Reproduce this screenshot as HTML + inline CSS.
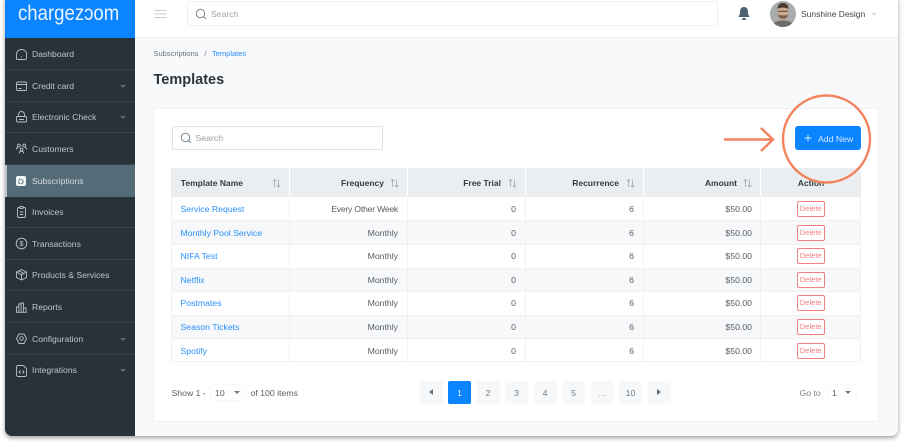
<!DOCTYPE html>
<html><head><meta charset="utf-8"><style>
html,body{margin:0;padding:0;width:902px;height:444px;overflow:hidden;background:#fff;font-family:"Liberation Sans",sans-serif}
*{box-sizing:border-box}
.a{position:absolute}
.t{position:absolute;white-space:nowrap;line-height:12px;font-size:8.7px}
#app{position:absolute;left:5px;top:-6px;width:893px;height:442px;background:#f7f9fb;border-radius:7px;box-shadow:0 2px 5px rgba(0,0,0,.38);overflow:hidden}
.si{position:absolute;left:5px;width:130px;height:32px;border-bottom:1px solid #33424c}
.st{position:absolute;left:32px;color:#bcc6cc;font-size:8.6px;line-height:12px;white-space:nowrap}
.car{position:absolute;left:120px;width:0;height:0;border-left:3px solid transparent;border-right:3px solid transparent;border-top:3px solid #5f6f79}
.th{position:absolute;top:168px;height:29px;background:#ebeef1;border-right:1px solid #fff;color:#343c43;font-weight:bold;font-size:8.5px;line-height:31px;text-align:right}
.pg{position:absolute;top:381px;width:23px;height:23px;background:#f7f8fa;border-radius:2px;text-align:center;line-height:24px;font-size:8.7px;color:#6d7a84}
.del{position:absolute;left:796.5px;width:28.5px;height:16px;border:1px solid #f27f81;border-radius:2px;color:#f27f81;background:#fff;font-size:7.6px;line-height:14px;text-align:center}
.ln{color:#2a8ffb}.g{color:#555e66}
</style></head><body>
<div id="app"></div>
<div class="a" style="left:135px;top:0;width:763px;height:38px;background:#fff;border-bottom:1px solid #f0f2f4"></div>
<div class="a" style="left:5px;top:0;width:130px;height:38px;background:#0a84ff"></div>
<div class="a" style="left:5px;top:38px;width:130px;height:398px;background:#273239;border-radius:0 0 0 7px"></div>
<div class="t" style="left:18px;top:1px;font-size:21px;line-height:26px;color:#eaf4ff;transform:scaleX(.885);transform-origin:left top">chargez<span>ɔ</span>om</div>

<svg class="a" style="left:154px;top:9px" width="14" height="10"><path d="M.5 1.500h12M.5 5h12M.5 8.500h12" stroke="#c5ccd2" stroke-width="1"/></svg>
<div class="a" style="left:187px;top:1px;width:531px;height:25px;border:1px solid #edf0f2;border-radius:2px;background:#fff"></div>
<svg class="a" style="left:195px;top:8px" width="12" height="12" fill="none" stroke="#7d8992"><circle cx="5.500" cy="5.500" r="4.200"/><path d="M8.500 8.500l2.500 2.500"/></svg>
<div class="t" style="left:211px;top:8px;color:#9aa4ab">Search</div>
<svg class="a" style="left:737px;top:6px" width="14" height="16"><path d="M7 1c-3 0-4 2.300-4 5 0 2.500-.8 3.800-1.800 5h11.600c-1-1.200-1.800-2.500-1.800-5 0-2.700-1-5-4-5z" fill="#4d6470"/><rect x="5" y="12" width="4" height="2" rx="1" fill="#4d6470"/></svg>
<svg class="a" style="left:769px;top:0" width="28" height="28"><defs><clipPath id="c"><circle cx="14" cy="14" r="13"/></clipPath></defs><g clip-path="url(#c)"><rect width="28" height="28" fill="#a8acac"/><path d="M3 28c1-6 5-7.500 11-7.500s10 1.500 11 7.500z" fill="#6f6c68"/><ellipse cx="14" cy="12.500" rx="5.500" ry="7.500" fill="#cfa98f"/><path d="M8.500 9c0-4.500 2.500-6 5.500-6s5.500 1.500 5.500 6c-2-1.800-9-2-11 0z" fill="#4a3a30"/><path d="M8.800 14c.7 6.500 9.700 6.500 10.400 0-1 1.600-2.200 1.400-5.200 1.400s-4.200.2-5.200-1.400z" fill="#7b5f4e"/><path d="M9 11.200h10" stroke="#4a4542" stroke-width="1"/></g></svg>
<div class="t" style="left:801px;top:8px;color:#3f474e;font-size:8.5px">Sunshine Design</div>
<div class="a" style="left:872px;top:13px;width:0;height:0;border-left:2.500px solid transparent;border-right:2.500px solid transparent;border-top:2.500px solid #c3cad0"></div>

<!-- sidebar -->
<div class="si" style="top:38px"></div><div class="si" style="top:70px"></div><div class="si" style="top:101px"></div><div class="si" style="top:133px"></div><div class="si" style="top:196px"></div><div class="si" style="top:228px"></div><div class="si" style="top:259px"></div><div class="si" style="top:291px"></div><div class="si" style="top:323px"></div><div class="si" style="top:354px;border:0"></div>
<div class="a" style="left:5px;top:165px;width:130px;height:32px;background:#546c78;border-left:2px solid #b8c5cc"></div>
<div class="st" style="top:48px">Dashboard</div>
<div class="st" style="top:80px">Credit card</div><div class="car" style="top:85px"></div>
<div class="st" style="top:111px">Electronic Check</div><div class="car" style="top:116px"></div>
<div class="st" style="top:143px">Customers</div>
<div class="st" style="top:175px;color:#d3dbe0">Subscriptions</div>
<div class="st" style="top:206px">Invoices</div>
<div class="st" style="top:238px">Transactions</div>
<div class="st" style="top:269px">Products &amp; Services</div>
<div class="st" style="top:301px">Reports</div>
<div class="st" style="top:333px">Configuration</div><div class="car" style="top:338px"></div>
<div class="st" style="top:364px">Integrations</div><div class="car" style="top:369px"></div>
<svg class="a" style="left:14.500px;top:47px" width="13" height="330" fill="none" stroke="#b8c3c9" stroke-width=".9">
<path d="M1.500 12.500V7.500C1.500 4 4 2.500 6.500 2.500S11.500 4 11.500 7.500v3.500a1.500 1.500 0 0 1-1.500 1.500H3A1.500 1.500 0 0 1 1.500 11z"/><path d="M6 10h1"/>
<g transform="translate(0,32)"><rect x="1.500" y="3" width="10" height="8.500" rx="1"/><path d="M1.500 5.500h10M3.500 9.500h3"/></g>
<g transform="translate(0,63)"><rect x="1.500" y="6.500" width="10" height="5.500" rx="1"/><path d="M3.500 6.500V4.500a3 3 0 0 1 6 0v2M4 9.500h5"/></g>
<g transform="translate(0,95)"><circle cx="3.800" cy="3.500" r="1.400"/><circle cx="9.200" cy="3.500" r="1.400"/><circle cx="6.500" cy="7.500" r="1.400"/><path d="M1.300 7.500c0-1.500.8-2 2-2M11.700 7.500c0-1.500-.8-2-2-2M4.200 11.500c0-1.500.8-2.200 2.300-2.200s2.300.7 2.300 2.200"/></g>
<g transform="translate(0,158)"><rect x="2.500" y="2.500" width="8" height="10" rx="1.500"/><rect x="5" y="1.500" width="3" height="2" fill="#273239"/><path d="M4.800 7h3.500M4.800 9.500h3.500"/></g>
<g transform="translate(0,190)"><circle cx="6.500" cy="6.500" r="5.300"/><text x="6.500" y="9.200" font-size="7.500" font-family="Liberation Sans" text-anchor="middle" fill="#b8c3c9" stroke="none">$</text></g>
<g transform="translate(0,221)"><path d="M6.500 1.500L11.500 4v5.500L6.500 12 1.500 9.500V4zM1.500 4L6.500 6.800 11.500 4M6.500 6.800V12M4 2.800l5 2.700"/></g>
<g transform="translate(0,253)"><path d="M1.500 12V7h2.300v5M3.800 12V4h2.300v8M6.100 12V3h2.300v9M8.400 12V8h2.600v4M.8 12.300h11"/></g>
<g transform="translate(0,285)"><path d="M4 2h5l2.500 4.500L9 11.500H4L1.500 6.500z" stroke-linejoin="round"/><circle cx="6.500" cy="6.500" r="1.800"/></g>
<g transform="translate(0,317)"><path d="M3 1.500h5.500l3 3v6.500a1.500 1.500 0 0 1-1.500 1.500H3A1.500 1.500 0 0 1 1.500 11V3A1.500 1.500 0 0 1 3 1.500z"/><path d="M5.500 6.500L4 8l1.500 1.500M7.500 6.500L9 8 7.500 9.500"/></g>
</svg>
<div class="a" style="left:16px;top:176px;width:9.500px;height:10px;background:#f2f5f6;border-radius:2px"></div>
<svg class="a" style="left:16px;top:176.500px" width="10" height="9" fill="none" stroke="#546c78"><circle cx="4.800" cy="4.500" r="2.300" stroke-dasharray="3 1"/></svg>

<!-- page head -->
<div class="t" style="left:153.500px;top:48px;font-size:7.500px;color:#68747d">Subscriptions</div>
<div class="t" style="left:204.500px;top:48px;font-size:7.500px;color:#68747d">/</div>
<div class="t" style="left:212px;top:48px;font-size:7.500px;color:#2a8ffb">Templates</div>
<div class="t" style="left:153.500px;top:71px;font-size:14.500px;line-height:18px;font-weight:bold;color:#2d353c">Templates</div>

<!-- card -->
<div class="a" style="left:153px;top:108px;width:726px;height:314px;background:#fff;border:1px solid #eff1f3;border-radius:2px"></div>
<div class="a" style="left:172px;top:126px;width:211px;height:24px;border:1px solid #dce1e5;border-radius:2px"></div>
<svg class="a" style="left:180px;top:132px" width="12" height="12" fill="none" stroke="#7d8992"><circle cx="5.500" cy="5.500" r="4.200"/><path d="M8.500 8.500l2.500 2.500"/></svg>
<div class="t" style="left:195.500px;top:132px;color:#98a2a9">Search</div>
<div class="a" style="left:795px;top:126px;width:66px;height:24px;background:#0a84ff;border-radius:3px"></div>
<svg class="a" style="left:804px;top:134px" width="8" height="8"><path d="M4 .5v7M.5 4h7" stroke="#d7e9ff" stroke-width="1"/></svg>
<div class="t" style="left:818px;top:132.500px;color:#d7e9ff">Add New</div>

<!-- table -->
<div class="a" style="left:171px;top:197px;width:690px;height:165px;border:1px solid #eef0f2;border-top:0"></div>
<div class="a" style="left:172px;top:221px;width:688px;height:23.500px;background:#f7f8fa"></div>
<div class="a" style="left:172px;top:268px;width:688px;height:23.500px;background:#f7f8fa"></div>
<div class="a" style="left:172px;top:315px;width:688px;height:24px;background:#f7f8fa"></div>
<svg class="a" style="left:171px;top:197px" width="690" height="165" stroke="#eff1f3" fill="none"><path d="M118.500 0v165M236.500 0v165M354.500 0v165M472.500 0v165M589.500 0v165M0 23.500h690M0 47.500h690M0 71.500h690M0 94.500h690M0 118.500h690M0 141.500h690"/></svg>
<div class="th" style="left:171px;width:119px;padding-right:46px">Template Name</div>
<div class="th" style="left:290px;width:118px;padding-right:23px">Frequency</div>
<div class="th" style="left:408px;width:118px;padding-right:24px">Free Trial</div>
<div class="th" style="left:526px;width:118px;padding-right:24px">Recurrence</div>
<div class="th" style="left:644px;width:117px;padding-right:23px">Amount</div>
<div class="th" style="left:761px;width:100px;text-align:center;border:0">Action</div>
<svg class="a" style="left:0;top:178px" width="902" height="12" fill="none" stroke="#a9b4bb" stroke-width="1"><defs><path id="s" d="M2.500 9V1.500M.8 3.200L2.500 1.500 4.200 3.200M6.500 1.500V9M4.800 7.300L6.500 9 8.200 7.300"/></defs><use href="#s" x="272"/><use href="#s" x="390"/><use href="#s" x="508"/><use href="#s" x="626"/><use href="#s" x="743"/></svg>

<div id="r">
<div class="t ln" style="left:180.500px;top:203px">Service Request</div>
<div class="t ln" style="left:180.500px;top:227px">Monthly Pool Service</div>
<div class="t ln" style="left:180.500px;top:250px">NIFA Test</div>
<div class="t ln" style="left:180.500px;top:274px">Netflix</div>
<div class="t ln" style="left:180.500px;top:297px">Postmates</div>
<div class="t ln" style="left:180.500px;top:321px">Season Tickets</div>
<div class="t ln" style="left:180.500px;top:345px">Spotify</div>

<div class="t g" style="right:504px;top:203px;letter-spacing:-.25px">Every Other Week</div>
<div class="t g" style="right:504px;top:227px">Monthly</div>
<div class="t g" style="right:504px;top:250px">Monthly</div>
<div class="t g" style="right:504px;top:274px">Monthly</div>
<div class="t g" style="right:504px;top:297px">Monthly</div>
<div class="t g" style="right:504px;top:321px">Monthly</div>
<div class="t g" style="right:504px;top:345px">Monthly</div>

<div class="t g" style="right:386px;top:203px">0</div><div class="t g" style="right:386px;top:227px">0</div><div class="t g" style="right:386px;top:250px">0</div><div class="t g" style="right:386px;top:274px">0</div><div class="t g" style="right:386px;top:297px">0</div><div class="t g" style="right:386px;top:321px">0</div><div class="t g" style="right:386px;top:345px">0</div>

<div class="t g" style="right:268px;top:203px">6</div><div class="t g" style="right:268px;top:227px">6</div><div class="t g" style="right:268px;top:250px">6</div><div class="t g" style="right:268px;top:274px">6</div><div class="t g" style="right:268px;top:297px">6</div><div class="t g" style="right:268px;top:321px">6</div><div class="t g" style="right:268px;top:345px">6</div>

<div class="t g" style="right:150px;top:203px">$50.00</div><div class="t g" style="right:150px;top:227px">$50.00</div><div class="t g" style="right:150px;top:250px">$50.00</div><div class="t g" style="right:150px;top:274px">$50.00</div><div class="t g" style="right:150px;top:297px">$50.00</div><div class="t g" style="right:150px;top:321px">$50.00</div><div class="t g" style="right:150px;top:345px">$50.00</div>
</div>
<div class="del" style="top:201px">Delete</div><div class="del" style="top:225px">Delete</div><div class="del" style="top:248px">Delete</div><div class="del" style="top:272px">Delete</div><div class="del" style="top:295px">Delete</div><div class="del" style="top:319px">Delete</div><div class="del" style="top:342.500px">Delete</div>

<!-- footer -->
<div class="t g" style="left:171.500px;top:387px">Show 1 -</div>
<div class="a" style="left:211px;top:384px;width:35px;height:17px;border:1px solid #f7f8f9;border-radius:2px"></div>
<div class="t g" style="left:215px;top:387px">10</div>
<div class="a" style="left:234px;top:391px;width:0;height:0;border-left:3.500px solid transparent;border-right:3.500px solid transparent;border-top:3.500px solid #6d7a84"></div>
<div class="t g" style="left:250.500px;top:387px">of 100 items</div>

<div class="pg" style="left:420px"></div>
<div class="a" style="left:429px;top:389px;width:0;height:0;border-top:3.500px solid transparent;border-bottom:3.500px solid transparent;border-right:4px solid #66737d"></div>
<div class="pg" style="left:448px;background:#0a84ff;color:#e3f0ff">1</div>
<div class="pg" style="left:476.500px">2</div><div class="pg" style="left:505px">3</div><div class="pg" style="left:533.500px">4</div><div class="pg" style="left:562px">5</div><div class="pg" style="left:590.500px;color:#a4adb4">...</div><div class="pg" style="left:619px">10</div><div class="pg" style="left:647.500px"></div>
<div class="a" style="left:657px;top:389px;width:0;height:0;border-top:3.500px solid transparent;border-bottom:3.500px solid transparent;border-left:4px solid #66737d"></div>
<div class="t" style="left:799.500px;top:387px;color:#7b8790">Go to</div>
<div class="a" style="left:827px;top:384px;width:30px;height:17px;border:1px solid #f9fafb;border-radius:2px"></div>
<div class="t g" style="left:832px;top:387px">1</div>
<div class="a" style="left:845px;top:391px;width:0;height:0;border-left:3.500px solid transparent;border-right:3.500px solid transparent;border-top:3.500px solid #6d7a84"></div>

<!-- annotation -->
<svg class="a" style="left:720px;top:90px" width="160" height="100" fill="none" stroke="#f4835f" stroke-width="2.400"><circle cx="106.500" cy="49" r="43.500"/><path d="M4 49.500h49M41 38l12 11.500L41 61"/></svg>
</body></html>
